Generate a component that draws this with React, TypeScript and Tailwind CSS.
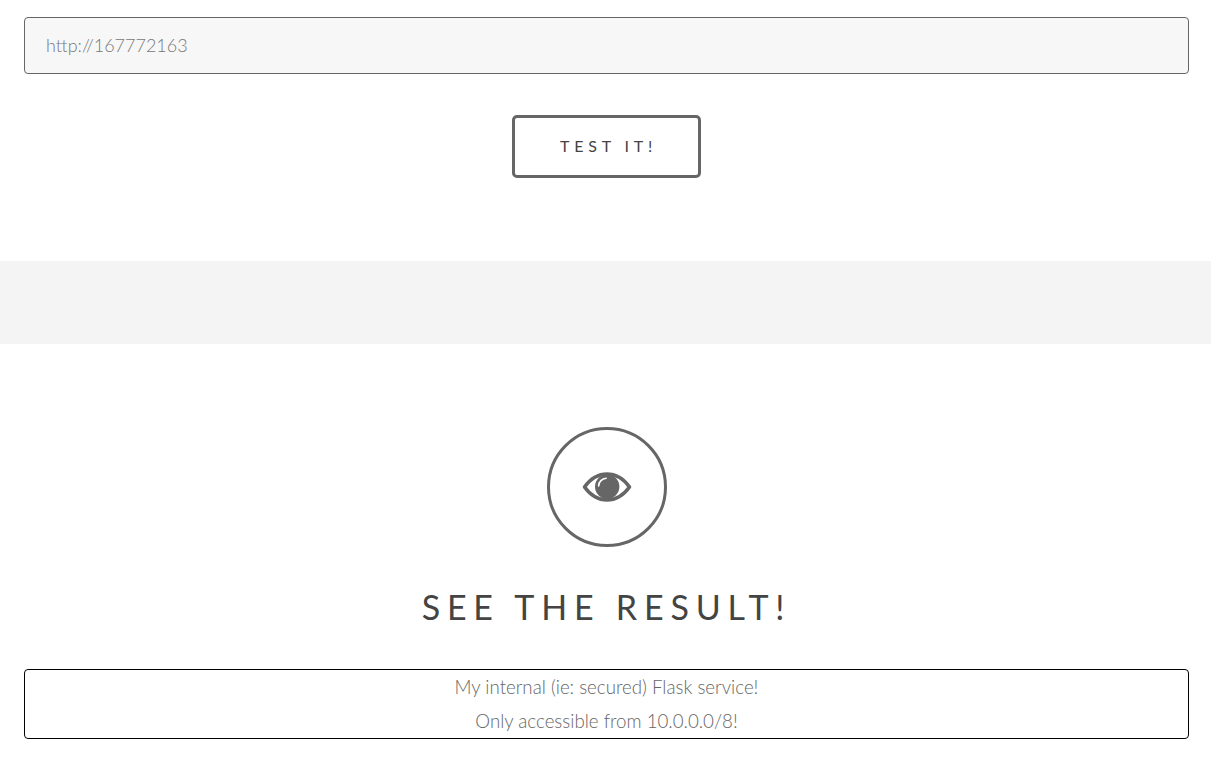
import React from 'react'

function EyeIcon() {
    return (
        <svg width="50" height="32" viewBox="0 0 50 32" fill="none">
            <path d="M2.5 16 C9 7 16.5 3 25 3 C33.5 3 41 7 47.5 16 C41 25 33.5 29 25 29 C16.5 29 9 25 2.5 16 Z" stroke="#666666" strokeWidth="3.6" strokeLinejoin="round" />
            <circle cx="25.2" cy="15.7" r="12.2" fill="#666666" />
            <path d="M16.6 15 C16.8 10.8 20 7.6 24.2 7.2" stroke="#ffffff" strokeWidth="1.6" strokeLinecap="round" />
        </svg>
    )
}

export default function App() {
    return (
        <div className="min-h-[758px] bg-white font-['Lato',sans-serif] overflow-hidden">
            {/* Form */}
            <div className="pl-6 pr-[22px] pt-[17px] h-[261px]">
                <div className="h-[57px] flex items-center pl-[21px] pr-[22px] bg-[#f7f7f7] border border-[#666666] rounded text-[18px] font-light text-[#777777]">
                    http://167772163
                </div>
                <div className="flex justify-center mt-[41px]">
                    <button className="w-[189px] h-[63px] pl-[4px] pb-[2px] border-[3px] border-[#666666] rounded-[5px] text-[16px] tracking-[0.3em] text-[#444444]">
                        TEST IT!
                    </button>
                </div>
            </div>

            {/* Divider band */}
            <div className="h-[83px] bg-[#f4f4f4]" />

            {/* Result */}
            <div className="flex flex-col items-center pt-[83px] pl-6 pr-[22px]">
                <div className="w-[120px] h-[120px] rounded-full border-[3px] border-[#666666] flex items-center justify-center">
                    <EyeIcon />
                </div>
                <h2 className="mt-[39px] text-[34px] leading-[42px] tracking-[0.2em] text-[#444444]">SEE THE RESULT!</h2>
                <div className="mt-[41px] w-full h-[70px] border border-black rounded text-center text-[18.7px] leading-[34px] font-light text-[#666666]">
                    <div>My internal (ie: secured) Flask service!</div>
                    <div>Only accessible from 10.0.0.0/8!</div>
                </div>
            </div>
        </div>
    )
}
